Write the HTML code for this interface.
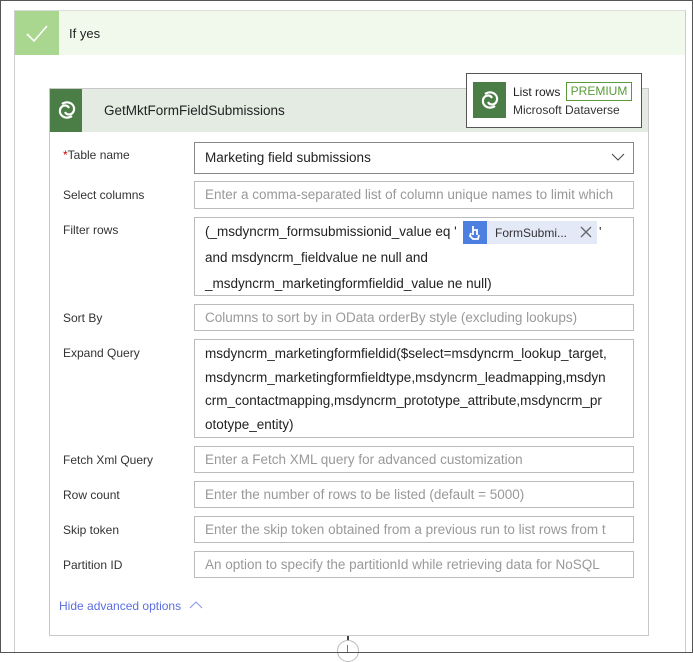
<html><head><style>
body{margin:0;width:693px;height:653px;overflow:hidden;background:#fff;font-family:"Liberation Sans",sans-serif;position:relative}
.a{position:absolute}
.lbl{position:absolute;left:63px;font-size:12px;color:#333}
.in{position:absolute;left:194px;width:440px;border:1px solid #bbb;font-size:13.5px;color:#999;padding-left:10px;box-sizing:border-box;white-space:nowrap;overflow:hidden}
.v{color:#222}
</style></head><body>
<div class="a" style="left:14px;top:10px;width:672px;height:643px;border-left:1px solid #ccc;border-right:1px solid #ccc;border-top:1px solid #ddd;box-sizing:border-box"></div>
<div class="a" style="left:15px;top:11px;width:670px;height:44px;background:#f1f8ec"></div>
<div class="a" style="left:15px;top:11px;width:44px;height:44px;background:#a9d78f"></div>
<svg class="a" style="left:24px;top:21px" width="26" height="24"><path d="M3 13 L10 20 L23 5" stroke="#fff" stroke-width="1.6" fill="none"/></svg>
<div class="a" style="left:69px;top:26px;font-size:13px;color:#222">If yes</div>

<div class="a" style="left:49px;top:88px;width:600px;height:548px;border:1px solid #c8c8c8;box-sizing:border-box"></div>
<div class="a" style="left:50px;top:89px;width:598px;height:43px;background:#e3ebe3"></div>
<div class="a" style="left:50px;top:89px;width:32px;height:43px;background:#4a7e46"></div>
<svg class="a" style="left:56px;top:99px" width="22" height="22"><path d="M6 5 C12 1 19 5 18 11 C17 16 11 17 9 13" stroke="#fff" stroke-width="2.2" fill="none"/><path d="M16 17 C10 21 3 17 4 11 C5 6 11 5 13 9" stroke="#fff" stroke-width="2.2" fill="none"/></svg>
<div class="a" style="left:104px;top:103px;font-size:13.5px;color:#222">GetMktFormFieldSubmissions</div>

<div class="a" style="left:466px;top:73px;width:176px;height:55px;border:1px solid #555;background:#fff;box-sizing:border-box"></div>
<div class="a" style="left:473px;top:82px;width:33px;height:36px;background:#4a7e46"></div>
<svg class="a" style="left:479px;top:89px" width="22" height="22"><path d="M6 5 C12 1 19 5 18 11 C17 16 11 17 9 13" stroke="#fff" stroke-width="2.2" fill="none"/><path d="M16 17 C10 21 3 17 4 11 C5 6 11 5 13 9" stroke="#fff" stroke-width="2.2" fill="none"/></svg>
<div class="a" style="left:513px;top:85px;font-size:12px;color:#222">List rows</div>
<div class="a" style="left:566px;top:82px;width:66px;height:19px;border:1px solid #5a9a3a;box-sizing:border-box;color:#5a9a3a;font-size:12px;text-align:center;line-height:17px">PREMIUM</div>
<div class="a" style="left:513px;top:103px;font-size:12px;color:#333">Microsoft Dataverse</div>

<div class="lbl" style="top:148px"><span style="color:#c00">*</span>Table name</div>
<div class="in v" style="top:142px;height:32px;line-height:30px;border-color:#888">Marketing field submissions</div>
<svg class="a" style="left:611px;top:152px" width="14" height="10"><path d="M1 2 L7 8 L13 2" stroke="#444" fill="none"/></svg>
<div class="lbl" style="top:188px">Select columns</div>
<div class="in" style="top:181px;height:28px;line-height:26px">Enter a comma-separated list of column unique names to limit which</div>
<div class="lbl" style="top:223px">Filter rows</div>
<div class="in v" style="top:217px;height:79px;line-height:26px;padding-top:1px;white-space:normal">(_msdyncrm_formsubmissionid_value eq '<br>and msdyncrm_fieldvalue ne null and<br>_msdyncrm_marketingformfieldid_value ne null)</div>
<div class="a" style="left:463px;top:221px;width:134px;height:23px;background:#e4e9f8"></div>
<div class="a" style="left:463px;top:221px;width:24px;height:23px;background:#4d7fe0"></div>
<svg class="a" style="left:467px;top:224px" width="16" height="17"><path d="M6 2 V11 M6 6 H10 V11 M4 9 L3 12 L6 15 H11 L12 11" stroke="#fff" stroke-width="1.8" fill="none"/></svg>
<div class="a" style="left:495px;top:226px;font-size:12px;color:#333">FormSubmi...</div>
<svg class="a" style="left:580px;top:226px" width="12" height="12"><path d="M1 1 L11 11 M11 1 L1 11" stroke="#666" stroke-width="1.3"/></svg>
<div class="a" style="left:599px;top:224px;font-size:13px;color:#222">'</div>
<div class="lbl" style="top:311px">Sort By</div>
<div class="in" style="top:304px;height:27px;line-height:25px">Columns to sort by in OData orderBy style (excluding lookups)</div>
<div class="lbl" style="top:346px">Expand Query</div>
<div class="in v" style="top:339px;height:99px;line-height:23.5px;padding-top:2px">msdyncrm_marketingformfieldid($select=msdyncrm_lookup_target,<br>msdyncrm_marketingformfieldtype,msdyncrm_leadmapping,msdyn<br>crm_contactmapping,msdyncrm_prototype_attribute,msdyncrm_pr<br>ototype_entity)</div>
<div class="lbl" style="top:453px">Fetch Xml Query</div>
<div class="in" style="top:446px;height:27px;line-height:25px">Enter a Fetch XML query for advanced customization</div>
<div class="lbl" style="top:488px">Row count</div>
<div class="in" style="top:481px;height:27px;line-height:25px">Enter the number of rows to be listed (default = 5000)</div>
<div class="lbl" style="top:523px">Skip token</div>
<div class="in" style="top:516px;height:27px;line-height:25px">Enter the skip token obtained from a previous run to list rows from t</div>
<div class="lbl" style="top:558px">Partition ID</div>
<div class="in" style="top:551px;height:27px;line-height:25px">An option to specify the partitionId while retrieving data for NoSQL</div>
<div class="a" style="left:59px;top:599px;font-size:12px;color:#5b6ee0">Hide advanced options</div>
<svg class="a" style="left:189px;top:600px" width="14" height="10"><path d="M1 8 L7 2 L13 8" stroke="#8a96e8" fill="none"/></svg>
<div class="a" style="left:347px;top:636px;width:2px;height:6px;background:#444"></div>
<div class="a" style="left:337px;top:640px;width:22px;height:22px;border:1.5px solid #bbb;border-radius:50%;background:#fff;box-sizing:border-box"></div>
<div class="a" style="left:347px;top:645px;width:1px;height:8px;background:#777"></div>
<div class="a" style="left:0;top:0;width:693px;height:653px;border:1px solid #555;box-sizing:border-box"></div>
</body></html>
